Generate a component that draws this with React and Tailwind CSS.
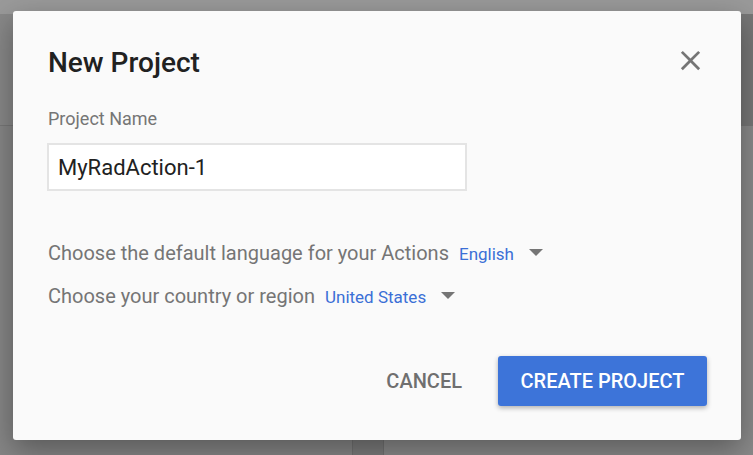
import React from "react";

function CloseIcon() {
  return (
    <svg viewBox="0 0 24 24" className="h-[33px] w-[33px]" fill="#757575">
      <path d="M19 6.41L17.59 5 12 10.59 6.41 5 5 6.41 10.59 12 5 17.59 6.41 19 12 13.41 17.59 19 19 17.59 13.41 12z" />
    </svg>
  );
}

function Caret() {
  return (
    <svg viewBox="0 0 14 7" className="h-[7px] w-[14px]" fill="#757575">
      <path d="M0 0h14L7 7z" />
    </svg>
  );
}

function Picker({ label, value, gap }) {
  return (
    <div className="flex items-center text-[20px] leading-[24px] text-[#757575]">
      <span>{label}</span>
      <span className="ml-[10px] mt-[2px] text-[17px] text-[#3b6fd6]">{value}</span>
      <span className={`${gap} mt-[-1px]`}>
        <Caret />
      </span>
    </div>
  );
}

export default function App() {
  return (
    <div
      className="relative flex h-[455px] w-[753px] flex-col overflow-hidden bg-[#868686]"
      style={{ fontFamily: "Roboto, 'Noto Sans', Arial, sans-serif" }}
    >
      {/* dimmed page behind the dialog */}
      <div className="h-[14px] bg-[#9a9a9a]" />
      <div className="flex h-[112px] border-b border-[#777777]">
        <div className="flex flex-1 items-center bg-[#888888]">
          <span className="ml-[-44px] mt-[-4px] text-[20px] text-[#4a4a4a]">Proj</span>
        </div>
        <div className="w-[12px] bg-[#777777]" />
      </div>
      <div className="flex flex-1">
        <div className="w-[352px]" />
        <div className="w-[32px] border-x border-[#727272] bg-[#7c7c7c]" />
        <div className="flex-1 bg-[#8a8a8a]" />
      </div>

      {/* dialog */}
      <div className="absolute left-[13px] top-[11px] flex h-[429px] w-[728px] flex-col rounded-[3px] bg-[#fafafa] pl-[35px] pr-[34px] pt-[36px] shadow-[0_10px_30px_rgba(0,0,0,0.35)]">
        <div className="flex items-start justify-between">
          <h1 className="text-[28px] font-medium leading-[32px] text-[#212121]">New Project</h1>
          <button className="mt-[-3px]">
            <CloseIcon />
          </button>
        </div>

        <label className="mt-[28px] text-[18px] leading-[24px] text-[#757575]">Project Name</label>
        <div className="mt-[12px] ml-[-1px] flex h-[48px] w-[420px] items-center border-2 border-[#e4e4e4] bg-white pl-[9px] text-[22px] text-[#212121]">
          MyRadAction-1
        </div>

        <div className="mt-[49px]">
          <Picker label="Choose the default language for your Actions" value="English" gap="ml-[15px]" />
        </div>
        <div className="mt-[17px]">
          <Picker label="Choose your country or region" value="United States" gap="ml-[15px]" />
        </div>

        <div className="mt-[47px] flex items-center justify-end gap-[20px]">
          <button className="h-[50px] px-[16px] text-[20px] font-medium text-[#6f6f6f]">CANCEL</button>
          <button className="h-[50px] w-[209px] rounded-[3px] bg-[#3d74d9] text-[20px] font-medium text-white shadow-[0_2px_5px_rgba(0,0,0,0.3)]">
            CREATE PROJECT
          </button>
        </div>
      </div>
    </div>
  );
}
